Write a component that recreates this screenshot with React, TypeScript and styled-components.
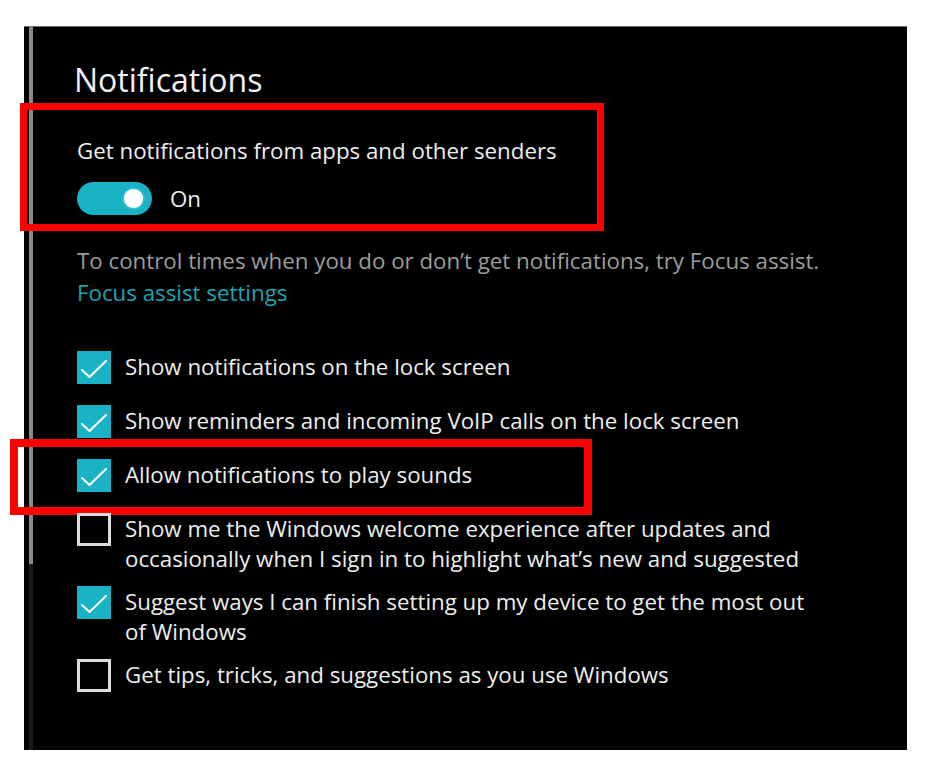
import * as React from 'react';
import styled, { createGlobalStyle, css } from 'styled-components';

const GlobalStyle = createGlobalStyle`
  html, body {
    margin: 0;
    padding: 0;
    background: #ffffff;
  }
  body {
    font-family: 'Open Sans', 'Noto Sans', Arial, sans-serif;
  }
`;

const Page = styled.div`
  padding: 26px 22px 18px 24px;
`;

const Panel = styled.div`
  display: flex;
  height: 724px;
  background: #000;
  border-top: 1px solid #6e6e6e;
  box-sizing: border-box;
`;

const ScrollRail = styled.div`
  flex-shrink: 0;
  width: 4px;
  margin-left: 5px;
  background: #1c1c1c;
`;

const ScrollThumb = styled.div`
  height: 537px;
  background: #8a8a8a;
`;

const Content = styled.div`
  flex: 1;
  padding: 34px 30px 0 44px;
  color: #eeeeee;
  font-size: 22.3px;
  line-height: 28px;
`;

const Title = styled.h1`
  margin: 0 0 0 -3px;
  font-size: 32px;
  line-height: 38px;
  font-weight: 400;
  color: #f2f2f2;
`;

type BoxProps = {
  $top: number;
  $left: number;
  $w: number;
  $h: number;
  $stroke: number;
};

// red outline drawn on top of a group of settings
const outline = css<BoxProps>`
  content: '';
  position: absolute;
  top: ${({ $top }) => $top}px;
  left: ${({ $left }) => $left}px;
  width: ${({ $w }) => $w}px;
  height: ${({ $h }) => $h}px;
  border: ${({ $stroke }) => $stroke}px solid #ff0000;
  box-sizing: border-box;
  pointer-events: none;
`;

const Highlight = styled.div<BoxProps>`
  position: relative;
  margin-top: 38px;

  &::after {
    ${outline}
  }
`;

const Label = styled.div``;

const ToggleRow = styled.div`
  display: flex;
  align-items: center;
  gap: 18px;
  margin-top: 17px;
`;

const Track = styled.div`
  position: relative;
  width: 75px;
  height: 33px;
  border-radius: 17px;
  background: #19b2c5;
`;

const Knob = styled.div`
  position: absolute;
  top: 7px;
  right: 9px;
  width: 19px;
  height: 19px;
  border-radius: 50%;
  background: #ffffff;
  box-shadow: 0 0 3px rgba(255, 255, 255, 0.6);
`;

const HelpText = styled.p`
  margin: 32px 0 0;
  color: #9c9c9c;
`;

const Link = styled.a`
  display: block;
  margin-top: 4px;
  color: #1da4b4;
  text-decoration: none;
`;

const List = styled.div`
  margin-top: 44px;
`;

type RowProps = Partial<BoxProps> & { $mark?: boolean };

const Row = styled.div<RowProps>`
  position: relative;
  display: flex;
  align-items: flex-start;
  gap: 14px;
  min-height: 42px;
  margin-bottom: 12px;

  ${({ $mark }) =>
    $mark &&
    css<RowProps>`
      &::after {
        ${outline as any}
      }
    `}
`;

const Box = styled.div<{ $checked: boolean }>`
  flex-shrink: 0;
  width: 34px;
  height: 33px;
  box-sizing: border-box;
  display: flex;
  align-items: center;
  justify-content: center;
  ${({ $checked }) =>
    $checked
      ? css`
          background: #1ab2c6;
        `
      : css`
          border: 3px solid #dcdcdc;
        `}
`;

const RowText = styled.div`
  max-width: 700px;
  margin-top: 1px;
  line-height: 30px;
`;

const Check = () => (
  <svg width="34" height="33" viewBox="0 0 34 33">
    <polyline
      points="5,19 12.5,26 29,10"
      fill="none"
      stroke="#ffffff"
      strokeWidth="2"
      strokeLinecap="round"
      strokeLinejoin="round"
    />
  </svg>
);

type Option = {
  text: string;
  checked: boolean;
  mark?: boolean;
};

const options: Option[] = [
  { text: 'Show notifications on the lock screen', checked: true },
  {
    text: 'Show reminders and incoming VoIP calls on the lock screen',
    checked: true,
  },
  { text: 'Allow notifications to play sounds', checked: true, mark: true },
  {
    text: 'Show me the Windows welcome experience after updates and occasionally when I sign in to highlight what\u2019s new and suggested',
    checked: false,
  },
  {
    text: 'Suggest ways I can finish setting up my device to get the most out of Windows',
    checked: true,
  },
  {
    text: 'Get tips, tricks, and suggestions as you use Windows',
    checked: false,
  },
];

export default function App() {
  return (
    <Page>
      <GlobalStyle />
      <Panel>
        <ScrollRail>
          <ScrollThumb />
        </ScrollRail>
        <Content>
          <Title>Notifications</Title>

          <Highlight $top={-34} $left={-57} $w={584} $h={128} $stroke={7}>
            <Label>Get notifications from apps and other senders</Label>
            <ToggleRow>
              <Track>
                <Knob />
              </Track>
              <span>On</span>
            </ToggleRow>
          </Highlight>

          <HelpText>
            To control times when you do or don’t get notifications, try Focus
            assist.
          </HelpText>
          <Link>Focus assist settings</Link>

          <List>
            {options.map((o) =>
              o.mark ? (
                <Row
                  key={o.text}
                  $mark
                  $top={-20}
                  $left={-67}
                  $w={582}
                  $h={76}
                  $stroke={8}
                >
                  <Box $checked={o.checked}>{o.checked && <Check />}</Box>
                  <RowText>{o.text}</RowText>
                </Row>
              ) : (
                <Row key={o.text}>
                  <Box $checked={o.checked}>{o.checked && <Check />}</Box>
                  <RowText>{o.text}</RowText>
                </Row>
              )
            )}
          </List>
        </Content>
      </Panel>
    </Page>
  );
}
